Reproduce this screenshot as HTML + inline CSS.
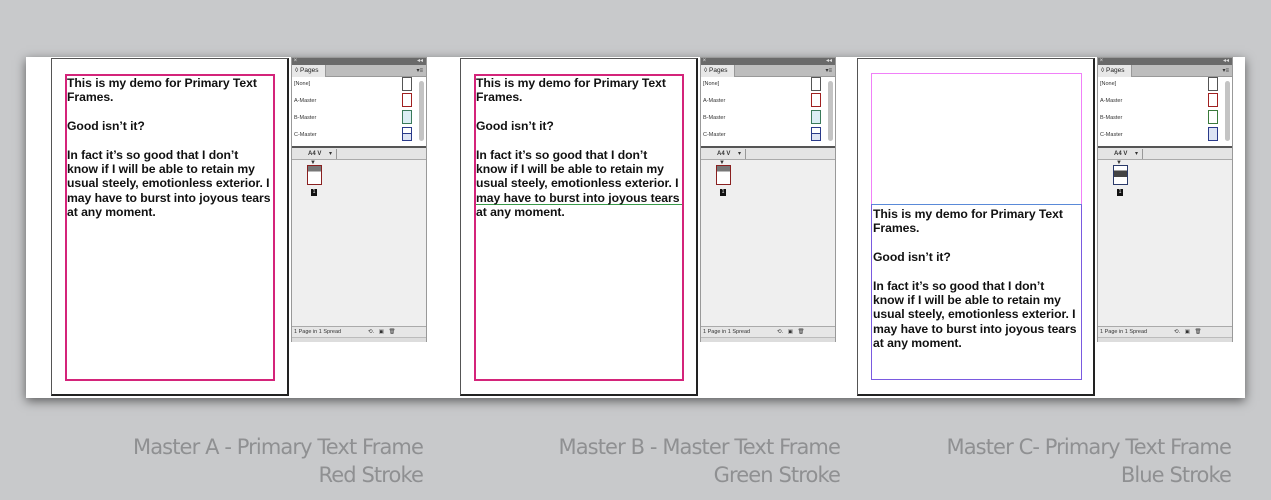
<!DOCTYPE html>
<html><head><meta charset="utf-8"><style>
*{margin:0;padding:0;box-sizing:border-box}
body{width:1271px;height:500px;overflow:hidden;background:#c8c9cb;font-family:"Liberation Sans",Arial,sans-serif;position:relative}
.band{position:absolute;left:26px;top:57px;width:1219px;height:341px;background:#fff;box-shadow:0 3px 10px rgba(0,0,0,.55)}
.page{position:absolute;top:58px;width:238px;height:338px;background:#fff;border:1px solid #555;border-right:2px solid #222;border-bottom:2px solid #222}
.frame{position:absolute;border:2px solid #d4247a}
.txt{position:absolute;font-weight:bold;font-size:12.2px;line-height:14.35px;color:#111;white-space:nowrap;letter-spacing:-0.05px}
.panel{position:absolute;top:57px;width:136px;height:285px;background:#efefef;border:1px solid #999;font-size:6px;color:#333}
.panel .top{position:absolute;left:0;top:0;width:100%;height:7px;background:#6a6a6a;color:#ddd;font-size:6px;line-height:7px}
.panel .tabs{position:absolute;left:0;top:7px;width:100%;height:12px;background:#bdbdbd;border-bottom:1px solid #999}
.panel .tab{position:absolute;left:0;top:0;width:34px;height:12px;background:#e8e8e8;border-right:1px solid #999;font-size:6.5px;line-height:12px;padding-left:3px;color:#222}
.panel .masters{position:absolute;left:0;top:19px;width:100%;height:69px;background:#fff}
.panel .row{position:absolute;left:2px;font-size:5.5px}
.panel .thumb{position:absolute;left:110px;width:10px;height:14px;border:1px solid #555;background:#fff}
.panel .scroll{position:absolute;right:2px;top:4px;width:5px;height:60px;background:#c4c4c4;border-radius:3px}
.panel .sep{position:absolute;left:0;top:88px;width:100%;height:2px;background:#555}
.panel .tool{position:absolute;left:0;top:90px;width:100%;height:12px;background:#e4e4e4;border-bottom:1px solid #aaa;font-size:6px;line-height:12px}
.panel .foot{position:absolute;left:0;top:268px;width:100%;height:11px;background:#e6e6e6;border-top:1px solid #aaa;font-size:5.5px;line-height:11px;padding-left:2px}
.panel .strip{position:absolute;left:0;top:279px;width:100%;height:5px;background:#ddd;border-top:1px solid #bbb}
.pthumb{position:absolute;left:15px;top:107px;width:15px;height:20px;border:1.5px solid #8a2020;background:#fff}
.badge{position:absolute;left:19px;top:131px;width:6px;height:7px;background:#111;color:#fff;font-size:5px;line-height:7px;text-align:center}
.cap{position:absolute;text-align:right;font-size:21px;line-height:28px;color:#8f9092;font-family:"DejaVu Sans","Liberation Sans",sans-serif;letter-spacing:-0.9px;white-space:nowrap}
</style></head><body>
<div class="band"></div>

<!-- Page 1 -->
<div class="page" style="left:51px"></div>
<div class="frame" style="left:65px;top:74px;width:210px;height:307px"></div>
<div class="txt" style="left:67px;top:76px">This is my demo for Primary Text<br>Frames.<br><br>Good isn’t it?<br><br>In fact it’s so good that I don’t<br>know if I will be able to retain my<br>usual steely, emotionless exterior. I<br>may have to burst into joyous tears<br>at any moment.</div>

<!-- Page 2 -->
<div class="page" style="left:460px"></div>
<div class="frame" style="left:474px;top:74px;width:210px;height:307px"></div>
<div style="position:absolute;left:476px;top:204px;width:206px;height:1px;background:#3a9a4a"></div>
<div class="txt" style="left:476px;top:76px">This is my demo for Primary Text<br>Frames.<br><br>Good isn’t it?<br><br>In fact it’s so good that I don’t<br>know if I will be able to retain my<br>usual steely, emotionless exterior. I<br>may have to burst into joyous tears<br>at any moment.</div>

<!-- Page 3 -->
<div class="page" style="left:857px"></div>
<div style="position:absolute;left:871px;top:73px;width:211px;height:132px;border-left:1.5px solid #f080f8;border-right:1.5px solid #f080f8;border-top:1.5px solid #f080f8"></div>
<div style="position:absolute;left:871px;top:204px;width:211px;height:176px;border-left:1.5px solid #7a5ae0;border-right:1.5px solid #7a5ae0;border-bottom:1.5px solid #7a5ae0;border-top:1.5px solid #5a8ad8"></div>
<div class="txt" style="left:873px;top:207px">This is my demo for Primary Text<br>Frames.<br><br>Good isn’t it?<br><br>In fact it’s so good that I don’t<br>know if I will be able to retain my<br>usual steely, emotionless exterior. I<br>may have to burst into joyous tears<br>at any moment.</div>

<!-- Panels -->
<div class="panel" style="left:291px">
 <div class="top">&nbsp;×<span style="position:absolute;right:3px">◂◂</span></div>
 <div class="tabs"><div class="tab">◊ Pages</div><span style="position:absolute;right:3px;top:2px;font-size:6px">▾≡</span></div>
 <div class="masters">
  <div class="row" style="top:4px">[None]</div><div class="thumb" style="top:0"></div>
  <div class="row" style="top:21px">A-Master</div><div class="thumb" style="top:16px;border-color:#a02020"></div>
  <div class="row" style="top:38px">B-Master</div><div class="thumb" style="top:33px;border-color:#3a7a5a;background:#dbeef4"></div>
  <div class="row" style="top:55px">C-Master</div><div class="thumb" style="top:50px;border-color:#2a3a8a;background:linear-gradient(#fff 40%,#2a3a8a 40%,#2a3a8a 48%,#dde4f4 48%)"></div>
  <div class="scroll"></div>
 </div>
 <div class="sep"></div>
 <div class="tool"><span style="margin-left:16px;font-weight:bold">A4 V</span> <span style="margin-left:6px">▾</span><span style="position:absolute;left:44px;top:1px;width:1px;height:10px;background:#999"></span></div>
 <div style="position:absolute;left:18px;top:102px;font-size:6px">▼</div>
 <div class="pthumb" style="background:linear-gradient(#777 0 30%,#fff 30%)"></div>
 <div class="badge">1</div>
 <div class="foot">1 Page in 1 Spread<span style="position:absolute;left:76px">⟲. &nbsp;&nbsp;▣ &nbsp;&nbsp;🗑</span></div>
 <div class="strip"></div>
</div>

<div class="panel" style="left:700px">
 <div class="top">&nbsp;×<span style="position:absolute;right:3px">◂◂</span></div>
 <div class="tabs"><div class="tab">◊ Pages</div><span style="position:absolute;right:3px;top:2px;font-size:6px">▾≡</span></div>
 <div class="masters">
  <div class="row" style="top:4px">[None]</div><div class="thumb" style="top:0"></div>
  <div class="row" style="top:21px">A-Master</div><div class="thumb" style="top:16px;border-color:#a02020"></div>
  <div class="row" style="top:38px">B-Master</div><div class="thumb" style="top:33px;border-color:#3a7a5a;background:#dbeef4"></div>
  <div class="row" style="top:55px">C-Master</div><div class="thumb" style="top:50px;border-color:#2a3a8a;background:linear-gradient(#fff 40%,#2a3a8a 40%,#2a3a8a 48%,#dde4f4 48%)"></div>
  <div class="scroll"></div>
 </div>
 <div class="sep"></div>
 <div class="tool"><span style="margin-left:16px;font-weight:bold">A4 V</span> <span style="margin-left:6px">▾</span><span style="position:absolute;left:44px;top:1px;width:1px;height:10px;background:#999"></span></div>
 <div style="position:absolute;left:18px;top:102px;font-size:6px">▼</div>
 <div class="pthumb" style="background:linear-gradient(#777 0 30%,#fff 30%)"></div>
 <div class="badge">1</div>
 <div class="foot">1 Page in 1 Spread<span style="position:absolute;left:76px">⟲. &nbsp;&nbsp;▣ &nbsp;&nbsp;🗑</span></div>
 <div class="strip"></div>
</div>

<div class="panel" style="left:1097px">
 <div class="top">&nbsp;×<span style="position:absolute;right:3px">◂◂</span></div>
 <div class="tabs"><div class="tab">◊ Pages</div><span style="position:absolute;right:3px;top:2px;font-size:6px">▾≡</span></div>
 <div class="masters">
  <div class="row" style="top:4px">[None]</div><div class="thumb" style="top:0"></div>
  <div class="row" style="top:21px">A-Master</div><div class="thumb" style="top:16px;border-color:#a02020"></div>
  <div class="row" style="top:38px">B-Master</div><div class="thumb" style="top:33px;border-color:#3a7a3a"></div>
  <div class="row" style="top:55px">C-Master</div><div class="thumb" style="top:50px;border-color:#2a3a8a;background:#dde4f4"></div>
  <div class="scroll"></div>
 </div>
 <div class="sep"></div>
 <div class="tool"><span style="margin-left:16px;font-weight:bold">A4 V</span> <span style="margin-left:6px">▾</span><span style="position:absolute;left:44px;top:1px;width:1px;height:10px;background:#999"></span></div>
 <div style="position:absolute;left:18px;top:102px;font-size:6px">▼</div>
 <div class="pthumb" style="border-color:#2a3a6a;background:linear-gradient(#fff 0 25%,#444 25% 60%,#fff 60%)"></div>
 <div class="badge">1</div>
 <div class="foot">1 Page in 1 Spread<span style="position:absolute;left:76px">⟲. &nbsp;&nbsp;▣ &nbsp;&nbsp;🗑</span></div>
 <div class="strip"></div>
</div>

<!-- Captions -->
<div class="cap" style="right:848px;top:433px">Master A - Primary Text Frame<br>Red Stroke</div>
<div class="cap" style="right:431px;top:433px">Master B - Master Text Frame<br>Green Stroke</div>
<div class="cap" style="right:40px;top:433px">Master C- Primary Text Frame<br>Blue Stroke</div>
</body></html>
